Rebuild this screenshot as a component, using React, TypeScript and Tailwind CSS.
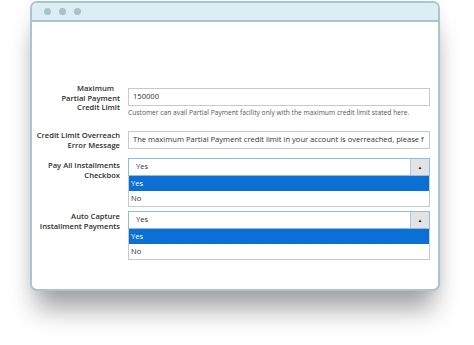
import React from 'react';

const font = { fontFamily: '"Open Sans", "Noto Sans", Arial, sans-serif' };

const Label: React.FC<{ lines: string[]; className?: string }> = ({ lines, className = '' }) => (
  <div className={`w-[88px] shrink-0 text-right text-[7.6px] font-semibold leading-[9.5px] text-[#2e2e2e] ${className}`}>
    {lines.map((l) => (
      <div key={l} className="whitespace-nowrap">
        {l}
      </div>
    ))}
  </div>
);

const TextInput: React.FC<{ value: string }> = ({ value }) => (
  <div className="flex h-[18px] w-[302px] items-center overflow-hidden whitespace-nowrap border border-[#c9c9c9] bg-white pl-[4px] text-[7.6px] text-[#333]">
    {value}
  </div>
);

const OpenSelect: React.FC = () => (
  <div className="w-[302px]">
    <div className="flex h-[18px] border border-[#8fbbe6] bg-white">
      <div className="flex flex-1 items-center pl-[7px] text-[7.6px] text-[#333]">Yes</div>
      <div className="flex w-[19px] items-center justify-center border-l border-[#a9c7e6] bg-[#e3e3e3]">
        <span className="text-[4.5px] leading-none text-[#222]">▲</span>
      </div>
    </div>
    <div className="border border-t-0 border-[#c9c9c9]">
      <div className="flex h-[15px] items-center bg-[#0b6fd3] pl-[2px] text-[7.6px] text-white">Yes</div>
      <div className="flex h-[15px] items-center bg-white pl-[2px] text-[7.6px] text-[#333]">No</div>
    </div>
  </div>
);

export default function App() {
  return (
    <div className="h-[345px] w-[474px] bg-white" style={font}>
      <div className="pt-[1px]">
        <div className="ml-[30px] h-[290px] w-[410px] overflow-hidden rounded-[7px] border-2 border-[#a9c6ca] bg-white shadow-[0_24px_26px_-6px_rgba(0,0,0,0.36),0_0_14px_rgba(0,0,0,0.06)]">
          <div className="flex h-[19px] items-center gap-[8px] border-b-2 border-[#a9c6ca] bg-[#dcedf3] pl-[12px]">
            <span className="h-[7px] w-[7px] rounded-full bg-[#a6c3c7]" />
            <span className="h-[7px] w-[7px] rounded-full bg-[#a6c3c7]" />
            <span className="h-[7px] w-[7px] rounded-full bg-[#a6c3c7]" />
          </div>

          <div className="flex flex-col pt-[62px]">
            <div className="flex gap-[8px]">
              <Label lines={['Maximum', 'Partial Payment', 'Credit Limit']} className="[&>div:first-child]:pr-[6px]" />
              <div className="mt-[4px]">
                <TextInput value="150000" />
                <div className="mt-[3px] whitespace-nowrap text-[6.7px] leading-[8px] text-[#555]">
                  Customer can avail Partial Payment facility only with the maximum credit limit stated here.
                </div>
              </div>
            </div>

            <div className="mt-[14px] flex gap-[8px]">
              <Label lines={['Credit Limit Overreach', 'Error Message']} />
              <TextInput value="The maximum Partial Payment credit limit in your account is overreached, please f" />
            </div>

            <div className="mt-[8px] flex gap-[8px]">
              <Label lines={['Pay All Installments', 'Checkbox']} className="mt-[3px]" />
              <OpenSelect />
            </div>

            <div className="mt-[4px] flex gap-[8px]">
              <Label lines={['Auto Capture', 'Installment Payments']} className="mt-[1px]" />
              <OpenSelect />
            </div>
          </div>
        </div>
      </div>
    </div>
  );
}
